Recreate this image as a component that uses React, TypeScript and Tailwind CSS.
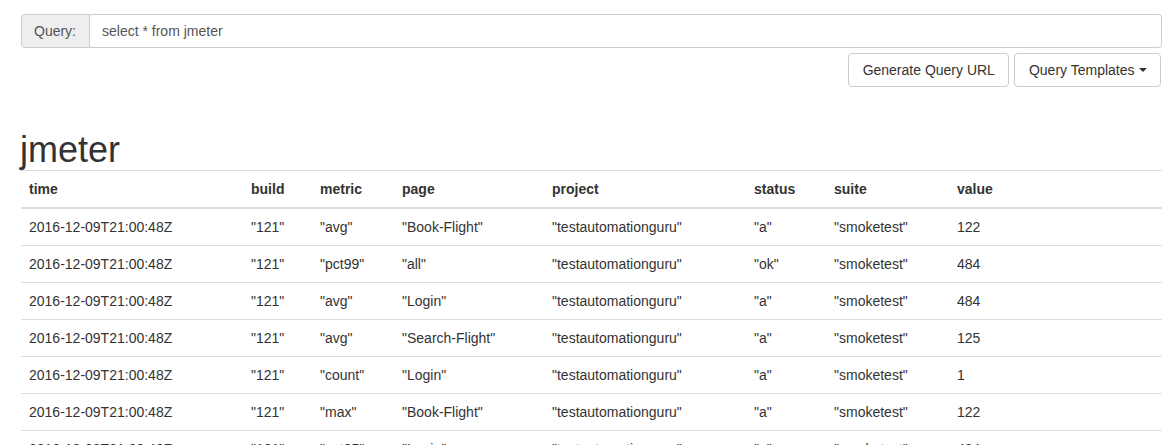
import React from 'react';

const columns = [
  { key: 'time', width: 'w-[222px]' },
  { key: 'build', width: 'w-[69px]' },
  { key: 'metric', width: 'w-[82px]' },
  { key: 'page', width: 'w-[150px]' },
  { key: 'project', width: 'w-[202px]' },
  { key: 'status', width: 'w-[80px]' },
  { key: 'suite', width: 'w-[123px]' },
  { key: 'value', width: '' },
];

const rows = [
  ['2016-12-09T21:00:48Z', '"121"', '"avg"', '"Book-Flight"', '"testautomationguru"', '"a"', '"smoketest"', '122'],
  ['2016-12-09T21:00:48Z', '"121"', '"pct99"', '"all"', '"testautomationguru"', '"ok"', '"smoketest"', '484'],
  ['2016-12-09T21:00:48Z', '"121"', '"avg"', '"Login"', '"testautomationguru"', '"a"', '"smoketest"', '484'],
  ['2016-12-09T21:00:48Z', '"121"', '"avg"', '"Search-Flight"', '"testautomationguru"', '"a"', '"smoketest"', '125'],
  ['2016-12-09T21:00:48Z', '"121"', '"count"', '"Login"', '"testautomationguru"', '"a"', '"smoketest"', '1'],
  ['2016-12-09T21:00:48Z', '"121"', '"max"', '"Book-Flight"', '"testautomationguru"', '"a"', '"smoketest"', '122'],
  ['2016-12-09T21:00:48Z', '"121"', '"pct95"', '"Login"', '"testautomationguru"', '"a"', '"smoketest"', '484'],
];

export default function App() {
  return (
    <div
      className="bg-white text-[14px] leading-[20px] text-[#333] pl-[21px] pr-[2px] pt-[14px] h-[445px] overflow-hidden"
      style={{ fontFamily: '"Liberation Sans", Arial, sans-serif' }}
    >
      {/* query input */}
      <div className="flex h-[34px]">
        <span className="flex items-center px-[12px] bg-[#eee] text-[#555] border border-[#ccc] rounded-l-[4px] w-[69px]">
          Query:
        </span>
        <input
          className="flex-1 px-[12px] border border-l-0 border-[#ccc] rounded-r-[4px] text-[#555] outline-none"
          defaultValue="select * from jmeter"
        />
      </div>

      <div className="flex justify-end gap-[5px] mt-[5px] pr-[1px]">
        <button className="h-[34px] px-[13.5px] bg-white border border-[#ccc] rounded-[4px] text-[#333]">
          Generate Query URL
        </button>
        <button className="h-[34px] px-[13.5px] bg-white border border-[#ccc] rounded-[4px] text-[#333] flex items-center">
          Query Templates
          <span className="ml-[4px] w-0 h-0 border-x-[4px] border-x-transparent border-t-[4px] border-t-[#333]" />
        </button>
      </div>

      <h1 className="mt-[43px] text-[36px] leading-[40px] font-normal text-[#333] -ml-[1px]">jmeter</h1>

      <table className="w-full border-collapse">
        <thead>
          <tr>
            {columns.map(c => (
              <th
                key={c.key}
                className={`${c.width} text-left font-bold p-[8px] border-t border-t-[#ddd] border-b-2 border-b-[#ddd]`}
              >
                {c.key}
              </th>
            ))}
          </tr>
        </thead>
        <tbody>
          {rows.map((r, i) => (
            <tr key={i}>
              {r.map((cell, j) => (
                <td key={j} className="p-[8px] border-t border-[#ddd] whitespace-nowrap">
                  {cell}
                </td>
              ))}
            </tr>
          ))}
        </tbody>
      </table>
    </div>
  );
}
